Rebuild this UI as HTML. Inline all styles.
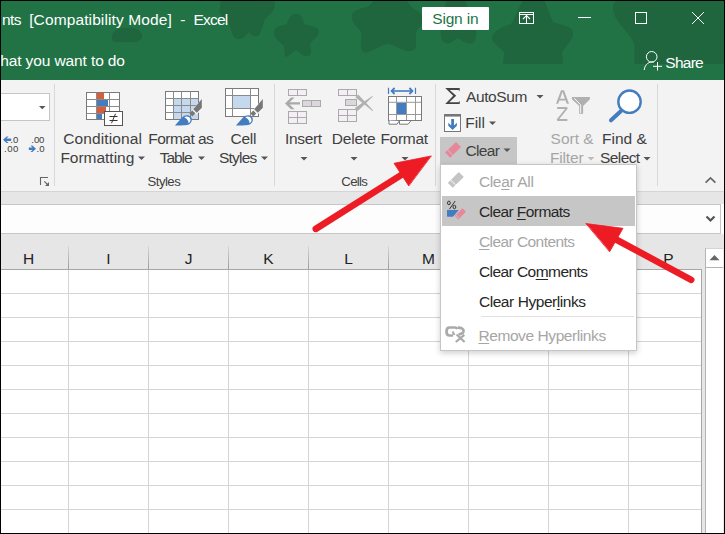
<!DOCTYPE html>
<html><head><meta charset="utf-8"><style>
html,body{margin:0;padding:0;width:725px;height:534px;overflow:hidden;background:#fff;}
body{position:relative;font-family:"Liberation Sans",sans-serif;}
.t{position:absolute;white-space:nowrap;}
.r{position:absolute;}
u{text-decoration:underline;text-underline-offset:1.5px;text-decoration-thickness:1px;}
</style></head><body>
<div class="r" style="left:0px;top:0px;width:725px;height:80px;background:#217346;"></div>
<svg class="r" style="left:0;top:0" width="725" height="534" viewBox="0 0 725 534" ><g fill="#1f653e">
<path d="M221,0 L274,0 C276,6 274,12 268,16 C262,20 263,30 259,35 C255,38 251,35 249,32 C246,36 242,40 237,39 C231,37 232,28 228,22 C224,18 218,14 220,8 Z"/>
<path d="M295,14 C300,13 303,18 304,24 C308,26 318,26 319,31 C319,37 312,40 310,44 C311,49 312,55 308,56 C303,57 299,52 296,50 C292,52 290,56 285,57 L284,46 C280,42 273,38 274,31 C275,26 283,26 287,24 C289,18 291,14 295,14 Z"/>
<path d="M374,0 H407 C409,6 414,9 419,12 C424,16 424,24 418,29 C415,33 416,40 416,45 C416,51 410,52 404,50 C398,48 392,44 387,44 C382,45 374,50 368,52 C362,54 360,48 361,42 C362,36 362,32 358,28 C353,24 350,18 353,13 C356,9 364,8 369,6 C371,4 373,2 374,0 Z"/>
<path d="M447,0 H465 C467,6 469,12 472,20 C476,28 478,36 474,42 C470,46 462,41 458,38 C454,40 450,45 445,43 C440,40 440,30 441,22 C442,14 445,6 447,0 Z"/>
<path d="M524,0 L544,0 C548,8 550,16 553,22 C560,25 572,26 573,32 C574,40 565,46 562,52 L563,64 L503,64 L504,52 C500,48 491,42 492,37 C494,30 505,26 511,24 C516,18 518,6 524,0 Z"/>
<path d="M618,0 H725 V64 H634.5 V46 C634.5,42 631,38 628,34 C622,26 614,18 613,10 C612.5,5 614,1.5 618,0 Z"/>
<path d="M112,36 C114,29 120,28 126,28 C134,27 142,30 142,36 C142,40 138,41 136,42 L115,42 C112,41 111,39 112,36 Z"/>
</g></svg>
<div class="t" style="left:1.97px;top:11.88px;font-size:15.5px;line-height:15.5px;color:#fff;letter-spacing:-0.544px;">nts</div>
<div class="t" style="left:-7.4px;top:11.88px;font-size:15.5px;line-height:15.5px;color:#fff;">e</div>
<div class="t" style="left:29.2px;top:11.88px;font-size:15.5px;line-height:15.5px;color:#fff;letter-spacing:0.115px;">[Compatibility Mode]</div>
<div class="t" style="left:180.31px;top:11.88px;font-size:15.5px;line-height:15.5px;color:#fff;letter-spacing:0.216px;">-</div>
<div class="t" style="left:193.43px;top:11.88px;font-size:15.5px;line-height:15.5px;color:#fff;letter-spacing:-0.773px;">Excel</div>
<div class="t" style="left:0.23px;top:53.08px;font-size:15.5px;line-height:15.5px;color:#fff;letter-spacing:-0.114px;">hat you want to do</div>
<div class="r" style="left:422px;top:7px;width:67px;height:23px;background:#fff;border-radius:1px"></div>
<div class="t" style="left:432.3px;top:10.58px;font-size:15.5px;line-height:15.5px;color:#217346;letter-spacing:-0.197px;">Sign in</div>
<svg class="r" style="left:0;top:0" width="725" height="534" viewBox="0 0 725 534" ><g fill="none" stroke="#fff" stroke-width="1">
<rect x="519.5" y="12.5" width="14" height="11"/>
<path d="M519.5,14.5 H533.5 M526.5,15 V23.5"/>
<path d="M523,19 L526.5,15.6 L530,19" stroke-width="1.1"/>
<path d="M578,17.5 H591"/>
<rect x="635.5" y="12.5" width="11" height="11"/>
<path d="M692,12 L704,24 M704,12 L692,24"/>
<circle cx="651.7" cy="56.8" r="5.3"/>
<path d="M644.2,70 C645,64 649,61.5 654,62"/>
<path d="M657.5,62 V70.5 M653,66.3 H662"/>
</g></svg>
<div class="t" style="left:665.3px;top:54.88px;font-size:15.5px;line-height:15.5px;color:#fff;letter-spacing:-0.742px;">Share</div>
<div class="r" style="left:0px;top:80px;width:725px;height:111px;background:#f3f3f3;"></div>
<div class="r" style="left:0px;top:191px;width:725px;height:1px;background:#d5d5d5;"></div>
<div class="r" style="left:0px;top:192px;width:725px;height:12px;background:#e6e6e6;"></div>
<div class="r" style="left:54px;top:84px;width:1px;height:102px;background:#d8d8d8;"></div>
<div class="r" style="left:274px;top:84px;width:1px;height:102px;background:#d8d8d8;"></div>
<div class="r" style="left:435px;top:84px;width:1px;height:102px;background:#d8d8d8;"></div>
<div class="r" style="left:657px;top:84px;width:1px;height:102px;background:#d8d8d8;"></div>
<div class="r" style="left:1px;top:93px;width:49px;height:28px;background:#fff;box-sizing:border-box;border:1px solid #c6c6c6;border-left:none"></div>
<svg class="r" style="left:0;top:0" width="725" height="534" viewBox="0 0 725 534" ><path d="M39,106 H45.5 L42.25,109.3 Z" fill="#555"/></svg>
<div class="t" style="left:10.32px;top:134.67px;font-size:9.6px;line-height:9.6px;color:#404040;letter-spacing:-0.055px;">.0</div>
<div class="t" style="left:4.12px;top:143.57px;font-size:9.6px;line-height:9.6px;color:#404040;letter-spacing:0.403px;">.00</div>
<div class="t" style="left:31.32px;top:134.67px;font-size:9.6px;line-height:9.6px;color:#404040;letter-spacing:-0.097px;">.00</div>
<div class="t" style="left:36.52px;top:143.57px;font-size:9.6px;line-height:9.6px;color:#404040;letter-spacing:-0.055px;">.0</div>
<svg class="r" style="left:0;top:0" width="725" height="534" viewBox="0 0 725 534" ><path d="M3,139.8 L6.6,136.6 H8.6 L6.4,138.6 H11.2 V141 H6.4 L8.6,143 H6.6 Z" fill="#447cc0"/>
<path d="M36,148.8 L32.4,145.6 H30.4 L32.6,147.6 H28.8 V150 H32.6 L30.4,152 H32.4 Z" fill="#447cc0"/>
<path d="M40.5,177 V185 M40.5,177.5 H48 M44.3,181.3 L47.5,184.5" fill="none" stroke="#666" stroke-width="1.1"/><polygon points="45,186 49,186 49,182" fill="#666"/></svg>
<svg class="r" style="left:0;top:0" width="725" height="534" viewBox="0 0 725 534" >
<rect x="86.5" y="92.5" width="33" height="27" fill="#fff" stroke="#7a7a7a"/>
<rect x="97" y="93" width="7" height="6" fill="#d95d3a"/>
<rect x="97" y="100" width="11" height="6" fill="#447cc0"/>
<rect x="97" y="107" width="9" height="6" fill="#d95d3a"/>
<rect x="97" y="114" width="5" height="5" fill="#447cc0"/>
<path d="M86.5,99.5 H119.5 M86.5,106.5 H119.5 M86.5,113.5 H119.5 M96.5,92.5 V119.5 M109.5,92.5 V119.5" stroke="#8a8a8a" fill="none"/>
<rect x="104.5" y="111.5" width="18" height="14" fill="#fff" stroke="#555"/>
<path d="M109.5,116.5 H117.5 M109.5,120.5 H117.5 M115.5,113.8 L111.5,123.2" stroke="#333" fill="none"/>
<rect x="165.5" y="91.5" width="33" height="28" fill="#fff" stroke="#7a7a7a"/>
<rect x="174" y="99" width="24" height="20" fill="#c5d9ee"/>
<path d="M165.5,98.5 H198.5 M165.5,105.5 H198.5 M165.5,112.5 H198.5 M173.5,91.5 V119.5 M181.5,91.5 V119.5 M190.5,91.5 V119.5" stroke="#8a8a8a" fill="none"/>
<polygon points="203,97.5 203,108.5 196.5,114.5 192,110" fill="#f3f3f3"/>
<g transform="translate(-61,0)">
<polygon points="262.8,98.9 262.8,107.8 257.8,112.8 254.2,109.2" fill="#777"/>
<polygon points="253.3,110.6 256.2,113.5 253.3,116.4 250.4,113.5" fill="#777"/>
<path d="M235.9,125.5 L243,117.5 C245.5,114.8 249.5,114.2 251.8,116.8 C253.6,119 253,122.3 250.5,124 C248.8,125.2 246.5,125.5 235.9,125.5 Z" fill="#447cc0"/>
<path d="M245.2,117.2 C247.5,116 250.5,116.6 251.3,119 C251.9,121 250.9,122.6 249.6,123.3 C249.6,121 248.3,118.6 245.2,117.2 Z" fill="#fff"/>
</g>
<rect x="225.5" y="88.5" width="33" height="28" fill="#fff" stroke="#7a7a7a"/>
<rect x="233" y="95" width="17.5" height="13.5" fill="#c5d9ee"/>
<path d="M225.5,95.5 H258.5 M225.5,108.5 H258.5 M232.5,88.5 V116.5 M250.5,88.5 V116.5" stroke="#8a8a8a" fill="none"/>
<polygon points="264,97.5 264,108.5 257.5,114.5 253,110" fill="#f3f3f3"/>
<g transform="translate(0,0)">
<polygon points="262.8,98.9 262.8,107.8 257.8,112.8 254.2,109.2" fill="#777"/>
<polygon points="253.3,110.6 256.2,113.5 253.3,116.4 250.4,113.5" fill="#777"/>
<path d="M235.9,125.5 L243,117.5 C245.5,114.8 249.5,114.2 251.8,116.8 C253.6,119 253,122.3 250.5,124 C248.8,125.2 246.5,125.5 235.9,125.5 Z" fill="#447cc0"/>
<path d="M245.2,117.2 C247.5,116 250.5,116.6 251.3,119 C251.9,121 250.9,122.6 249.6,123.3 C249.6,121 248.3,118.6 245.2,117.2 Z" fill="#fff"/>
</g>
</svg>
<div class="t" style="left:63.21px;top:130.88px;font-size:15.5px;line-height:15.5px;color:#404040;letter-spacing:0.107px;">Conditional</div>
<div class="t" style="left:60.43px;top:150.38px;font-size:15.5px;line-height:15.5px;color:#404040;letter-spacing:-0.023px;">Formatting</div>
<svg class="r" style="left:0;top:0" width="725" height="534" viewBox="0 0 725 534" ><path d="M138,156.5 H145 L141.5,160.0 Z" fill="#555"/></svg>
<div class="t" style="left:148.23px;top:130.88px;font-size:15.5px;line-height:15.5px;color:#404040;letter-spacing:-0.517px;">Format as</div>
<div class="t" style="left:159.65px;top:150.38px;font-size:15.5px;line-height:15.5px;color:#404040;letter-spacing:-1.009px;">Table</div>
<svg class="r" style="left:0;top:0" width="725" height="534" viewBox="0 0 725 534" ><path d="M198,156.5 H205 L201.5,160.0 Z" fill="#555"/></svg>
<div class="t" style="left:230.51px;top:130.88px;font-size:15.5px;line-height:15.5px;color:#404040;letter-spacing:-0.292px;">Cell</div>
<div class="t" style="left:219.0px;top:150.38px;font-size:15.5px;line-height:15.5px;color:#404040;letter-spacing:-0.789px;">Styles</div>
<svg class="r" style="left:0;top:0" width="725" height="534" viewBox="0 0 725 534" ><path d="M261,156.5 H268 L264.5,160.0 Z" fill="#555"/></svg>
<div class="t" style="left:147.6px;top:175.22px;font-size:13.2px;line-height:13.2px;color:#404040;letter-spacing:-0.554px;">Styles</div>
<svg class="r" style="left:0;top:0" width="725" height="534" viewBox="0 0 725 534" >
<g stroke="#aaa" fill="#f4eff4">
<rect x="288.5" y="89.5" width="18" height="6"/><path d="M297.5,89.5 V95.5"/>
<rect x="302.5" y="100.5" width="18" height="6" fill="#dcd7dc"/><path d="M311.5,100.5 V106.5"/>
<rect x="288.5" y="111.5" width="18" height="12"/><path d="M297.5,111.5 V123.5 M288.5,117.5 H306.5"/>
</g>
<polygon points="285,103.4 291,97.6 294.6,97.6 289.6,102.2 300,102.2 300,104.6 289.6,104.6 294.6,109.2 291,109.2" fill="#aaa"/>
<g stroke="#aaa" fill="#f4eff4">
<rect x="338.5" y="89.5" width="18" height="6"/><path d="M347.5,89.5 V95.5"/>
<rect x="345.5" y="99.5" width="11" height="6" fill="#dcd7dc"/>
<rect x="338.5" y="109.5" width="18" height="12"/><path d="M347.5,109.5 V121.5 M338.5,115.5 H356.5"/>
</g>
<polygon points="355.3,97.2 358.2,94.4 373.2,110.5 372.6,111" fill="#b0b0b0"/>
<polygon points="354.8,108 357.8,111 372.8,96.6 372.3,96.1" fill="#b0b0b0"/>
<path d="M388.5,87.7 V94 M415.5,87.7 V94" stroke="#447cc0" stroke-width="1.2"/>
<path d="M391.5,91 H412.5" stroke="#447cc0" stroke-width="1.6"/>
<path d="M394.6,88 L391.6,91 L394.6,94 M409.4,88 L412.4,91 L409.4,94" stroke="#447cc0" stroke-width="1.8" fill="none"/>
<rect x="388.5" y="96.5" width="33" height="24" fill="#fff" stroke="#7a7a7a"/>
<rect x="397" y="102.8" width="9.5" height="11.2" fill="#447cc0"/>
<path d="M388.5,102.3 H421.5 M388.5,114.5 H421.5 M396.5,96.5 V120.5 M406.5,96.5 V120.5 M415.5,96.5 V120.5" stroke="#999" fill="none"/>
<path d="M388.5,96.5 H421.5 V120.5 H388.5 Z" stroke="#7a7a7a" fill="none"/>
<path d="M389,120.5 V124.2 H397 L399.3,121 M399.5,121 V124.2 H408 L410.8,121" stroke="#7a7a7a" fill="#fff"/>
</svg>
<div class="t" style="left:285.07px;top:130.88px;font-size:15.5px;line-height:15.5px;color:#404040;letter-spacing:-0.344px;">Insert</div>
<svg class="r" style="left:0;top:0" width="725" height="534" viewBox="0 0 725 534" ><path d="M300.5,157 H307.5 L304.0,160.5 Z" fill="#555"/></svg>
<div class="t" style="left:331.73px;top:130.88px;font-size:15.5px;line-height:15.5px;color:#404040;letter-spacing:-0.169px;">Delete</div>
<svg class="r" style="left:0;top:0" width="725" height="534" viewBox="0 0 725 534" ><path d="M350.5,157 H357.5 L354.0,160.5 Z" fill="#555"/></svg>
<div class="t" style="left:380.43px;top:130.88px;font-size:15.5px;line-height:15.5px;color:#404040;letter-spacing:-0.281px;">Format</div>
<svg class="r" style="left:0;top:0" width="725" height="534" viewBox="0 0 725 534" ><path d="M401.5,157 H408.5 L405.0,160.5 Z" fill="#555"/></svg>
<div class="t" style="left:341.33px;top:175.12px;font-size:13.2px;line-height:13.2px;color:#404040;letter-spacing:-0.723px;">Cells</div>
<svg class="r" style="left:0;top:0" width="725" height="534" viewBox="0 0 725 534" >
<path d="M445.2,88 H459.7 V91.2 L458.6,89.9 H449.7 L456.2,95.8 L449.3,102.2 H458.6 L459.7,100.8 V104 H445.2 L453.2,95.8 Z" fill="#444"/>
<rect x="444.5" y="114.5" width="16" height="17" fill="#fff" stroke="#777"/>
<rect x="444" y="114" width="17" height="2.6" fill="#777"/>
<polygon points="451.2,118.9 454,118.9 454,125.5 456.9,122.8 456.9,125.8 452.6,130 448.3,125.8 448.3,122.8 451.2,125.5" fill="#447cc0"/>
<path fill-rule="evenodd" d="M556,103.8 L561,90.3 H564 L569,103.8 H566.8 L565.6,100.6 H559.4 L558.2,103.8 Z M560.1,98.7 H564.9 L562.5,92 Z" fill="#b0b0b0"/>
<path d="M557.2,108 H567 L557.4,120 H567.4" stroke="#b0b0b0" stroke-width="1.9" fill="none" stroke-linejoin="bevel"/>
<polygon points="571.9,97 589.9,97 589.9,99.2 583.1,106 583.1,113.8 579.2,113.8 579.2,106 571.9,99.2" fill="#b0b0b0"/>
<path d="M574.2,98.2 L580.7,104.9 V113" stroke="#fff" stroke-width="0.9" fill="none"/>
<circle cx="629.5" cy="101.7" r="11.2" fill="#fff" stroke="#447cc0" stroke-width="2.4"/>
<path d="M611,120.3 L621,111" stroke="#447cc0" stroke-width="4" stroke-linecap="round"/>
<path d="M705.6,182.6 L710.5,177.9 L715.4,182.6" stroke="#666" stroke-width="1.7" fill="none"/>
</svg>
<div class="t" style="left:466.07px;top:88.68px;font-size:15.5px;line-height:15.5px;color:#404040;letter-spacing:-0.417px;">AutoSum</div>
<svg class="r" style="left:0;top:0" width="725" height="534" viewBox="0 0 725 534" ><path d="M536.5,95 H543.5 L540.0,98.5 Z" fill="#555"/></svg>
<div class="t" style="left:465.13px;top:115.48px;font-size:15.5px;line-height:15.5px;color:#404040;letter-spacing:0.037px;">Fill</div>
<svg class="r" style="left:0;top:0" width="725" height="534" viewBox="0 0 725 534" ><path d="M489,121.5 H496 L492.5,125.0 Z" fill="#555"/></svg>
<div class="r" style="left:440px;top:137px;width:77px;height:27px;background:#c6c6c6;"></div>
<svg class="r" style="left:0;top:0" width="725" height="534" viewBox="0 0 725 534" ><polygon points="456,142 461,147 450.2,157.8 445,152.6" fill="#e8879a"/>
<path d="M447.6,150 L452.9,155.3" stroke="#c6c6c6" stroke-width="1"/></svg>
<div class="t" style="left:465.51px;top:142.68px;font-size:15.5px;line-height:15.5px;color:#404040;letter-spacing:-0.649px;">Clear</div>
<svg class="r" style="left:0;top:0" width="725" height="534" viewBox="0 0 725 534" ><path d="M503.5,148.5 H510.5 L507.0,152.0 Z" fill="#555"/></svg>
<div class="t" style="left:550.6px;top:130.88px;font-size:15.5px;line-height:15.5px;color:#a6a6a6;letter-spacing:-0.025px;">Sort &amp;</div>
<div class="t" style="left:550.03px;top:150.38px;font-size:15.5px;line-height:15.5px;color:#a6a6a6;letter-spacing:-0.183px;">Filter</div>
<svg class="r" style="left:0;top:0" width="725" height="534" viewBox="0 0 725 534" ><path d="M587.5,157 H594.5 L591.0,160.5 Z" fill="#bbb"/></svg>
<div class="t" style="left:602.03px;top:130.88px;font-size:15.5px;line-height:15.5px;color:#404040;letter-spacing:0.023px;">Find &amp;</div>
<div class="t" style="left:600.1px;top:150.38px;font-size:15.5px;line-height:15.5px;color:#404040;letter-spacing:-0.612px;">Select</div>
<svg class="r" style="left:0;top:0" width="725" height="534" viewBox="0 0 725 534" ><path d="M643.5,157 H650.5 L647.0,160.5 Z" fill="#555"/></svg>
<div class="r" style="left:0px;top:204px;width:721px;height:30px;background:#fdfdfd;box-sizing:border-box;border:1px solid #c6c6c6;border-left:none"></div>
<svg class="r" style="left:0;top:0" width="725" height="534" viewBox="0 0 725 534" ><path d="M706.5,216.5 L710.5,220.5 L714.5,216.5" stroke="#555" stroke-width="2.2" fill="none"/></svg>
<div class="r" style="left:0px;top:234px;width:725px;height:300px;background:#e6e6e6;"></div>
<div class="r" style="left:0px;top:270px;width:701px;height:264px;background:#fff;"></div>
<div class="r" style="left:0px;top:269px;width:701px;height:1px;background:#a6a6a6;"></div>
<div class="t" style="left:8.5px;top:250.88px;width:40px;text-align:center;font-size:15.5px;line-height:15.5px;color:#222">H</div>
<div class="t" style="left:88.5px;top:250.88px;width:40px;text-align:center;font-size:15.5px;line-height:15.5px;color:#222">I</div>
<div class="t" style="left:168.5px;top:250.88px;width:40px;text-align:center;font-size:15.5px;line-height:15.5px;color:#222">J</div>
<div class="t" style="left:248.5px;top:250.88px;width:40px;text-align:center;font-size:15.5px;line-height:15.5px;color:#222">K</div>
<div class="t" style="left:328.5px;top:250.88px;width:40px;text-align:center;font-size:15.5px;line-height:15.5px;color:#222">L</div>
<div class="t" style="left:408.5px;top:250.88px;width:40px;text-align:center;font-size:15.5px;line-height:15.5px;color:#222">M</div>
<div class="t" style="left:488.5px;top:250.88px;width:40px;text-align:center;font-size:15.5px;line-height:15.5px;color:#222">N</div>
<div class="t" style="left:568.5px;top:250.88px;width:40px;text-align:center;font-size:15.5px;line-height:15.5px;color:#222">O</div>
<div class="t" style="left:648.5px;top:250.88px;width:40px;text-align:center;font-size:15.5px;line-height:15.5px;color:#222">P</div>
<div class="r" style="left:68px;top:246px;width:1px;height:23px;background:linear-gradient(#d8d8d8,#9c9c9c);"></div>
<div class="r" style="left:68px;top:270px;width:1px;height:264px;background:#d4d4d4;"></div>
<div class="r" style="left:148px;top:246px;width:1px;height:23px;background:linear-gradient(#d8d8d8,#9c9c9c);"></div>
<div class="r" style="left:148px;top:270px;width:1px;height:264px;background:#d4d4d4;"></div>
<div class="r" style="left:228px;top:246px;width:1px;height:23px;background:linear-gradient(#d8d8d8,#9c9c9c);"></div>
<div class="r" style="left:228px;top:270px;width:1px;height:264px;background:#d4d4d4;"></div>
<div class="r" style="left:308px;top:246px;width:1px;height:23px;background:linear-gradient(#d8d8d8,#9c9c9c);"></div>
<div class="r" style="left:308px;top:270px;width:1px;height:264px;background:#d4d4d4;"></div>
<div class="r" style="left:388px;top:246px;width:1px;height:23px;background:linear-gradient(#d8d8d8,#9c9c9c);"></div>
<div class="r" style="left:388px;top:270px;width:1px;height:264px;background:#d4d4d4;"></div>
<div class="r" style="left:468px;top:246px;width:1px;height:23px;background:linear-gradient(#d8d8d8,#9c9c9c);"></div>
<div class="r" style="left:468px;top:270px;width:1px;height:264px;background:#d4d4d4;"></div>
<div class="r" style="left:548px;top:246px;width:1px;height:23px;background:linear-gradient(#d8d8d8,#9c9c9c);"></div>
<div class="r" style="left:548px;top:270px;width:1px;height:264px;background:#d4d4d4;"></div>
<div class="r" style="left:628px;top:246px;width:1px;height:23px;background:linear-gradient(#d8d8d8,#9c9c9c);"></div>
<div class="r" style="left:628px;top:270px;width:1px;height:264px;background:#d4d4d4;"></div>
<div class="r" style="left:0px;top:293px;width:701px;height:1px;background:#d4d4d4;"></div>
<div class="r" style="left:0px;top:317px;width:701px;height:1px;background:#d4d4d4;"></div>
<div class="r" style="left:0px;top:341px;width:701px;height:1px;background:#d4d4d4;"></div>
<div class="r" style="left:0px;top:365px;width:701px;height:1px;background:#d4d4d4;"></div>
<div class="r" style="left:0px;top:389px;width:701px;height:1px;background:#d4d4d4;"></div>
<div class="r" style="left:0px;top:413px;width:701px;height:1px;background:#d4d4d4;"></div>
<div class="r" style="left:0px;top:437px;width:701px;height:1px;background:#d4d4d4;"></div>
<div class="r" style="left:0px;top:461px;width:701px;height:1px;background:#d4d4d4;"></div>
<div class="r" style="left:0px;top:485px;width:701px;height:1px;background:#d4d4d4;"></div>
<div class="r" style="left:0px;top:509px;width:701px;height:1px;background:#d4d4d4;"></div>
<div class="r" style="left:0px;top:533px;width:701px;height:1px;background:#d4d4d4;"></div>
<div class="r" style="left:701px;top:269px;width:1px;height:265px;background:#a6a6a6;"></div>
<div class="r" style="left:705px;top:248px;width:18px;height:286px;background:#fff;box-sizing:border-box;border-left:1px solid #b4b4b4;border-top:1px solid #d4d4d4"></div>
<div class="r" style="left:705px;top:267px;width:18px;height:1px;background:#b4b4b4;"></div>
<svg class="r" style="left:0;top:0" width="725" height="534" viewBox="0 0 725 534" ><path d="M709.5,260.3 H719.5 L714.5,255 Z" fill="#666"/></svg>
<div class="r" style="left:440px;top:164px;width:197px;height:187px;background:#fff;box-sizing:border-box;border:1px solid #c6c6c6;box-shadow:0 2px 6px rgba(0,0,0,0.2)"></div>
<div class="r" style="left:442px;top:196px;width:193px;height:30px;background:#c6c6c6;"></div>
<div class="t" style="left:478.91px;top:174.18px;font-size:15.5px;line-height:15.5px;color:#a6a6a6;letter-spacing:-0.343px;">Cle<u>a</u>r All</div>
<div class="t" style="left:478.91px;top:204.08px;font-size:15.5px;line-height:15.5px;color:#262626;letter-spacing:-0.570px;">Clear <u>F</u>ormats</div>
<div class="t" style="left:478.91px;top:234.08px;font-size:15.5px;line-height:15.5px;color:#a6a6a6;letter-spacing:-0.557px;"><u>C</u>lear Contents</div>
<div class="t" style="left:478.91px;top:264.08px;font-size:15.5px;line-height:15.5px;color:#262626;letter-spacing:-0.549px;">Clear Co<u>m</u>ments</div>
<div class="t" style="left:478.91px;top:293.88px;font-size:15.5px;line-height:15.5px;color:#262626;letter-spacing:-0.437px;">Clear Hyper<u>l</u>inks</div>
<div class="r" style="left:481px;top:316px;width:153px;height:1px;background:#e1e1e1;"></div>
<div class="t" style="left:478.43px;top:327.78px;font-size:15.5px;line-height:15.5px;color:#a6a6a6;letter-spacing:-0.415px;"><u>R</u>emove Hyperlinks</div>
<svg class="r" style="left:0;top:0" width="725" height="534" viewBox="0 0 725 534" >
<polygon points="458.8,172 463.8,176.9 452.7,187.8 447.8,182.9" fill="#c4c4c4"/>
<path d="M450.6,180 L455.2,184.6" stroke="#fff" stroke-width="1"/>
<g stroke="#333" stroke-width="1" fill="none"><ellipse cx="448.9" cy="202.9" rx="1.4" ry="1.8"/><ellipse cx="454.4" cy="207" rx="1.4" ry="1.8"/><path d="M455.2,201 L449.4,209.2"/></g>
<path d="M447,210 H458.8 L453,216.7 H448.3 C447.5,216.7 447,216.2 447,215.4 Z" fill="#447cc0"/>
<polygon points="462.5,208.3 466,211.8 458.3,219.5 454.7,215.8" fill="#e8879a"/>
<path d="M455.7,214.6 L459.3,218.2" stroke="#c6c6c6" stroke-width="1"/>
<path d="M453,335.5 H449.5 C445.5,335.5 445.5,327.5 449.5,327.5 H455 C456.5,327.5 457,328 457.5,329" stroke="#aaa" stroke-width="2.7" fill="none"/>
<path d="M458,327.6 C462,327.6 464,329.5 463.5,331.5 C463,333.5 461,334.3 458.5,334.3" stroke="#aaa" stroke-width="2.7" fill="none"/>
<path d="M452.5,331.5 L454.5,335" stroke="#aaa" stroke-width="2" fill="none"/>
<path d="M456.6,334.5 L464.6,342 M455.8,342 L464.3,334.8" stroke="#aaa" stroke-width="2.2"/>
</svg>
<svg class="r" style="left:0;top:0" width="725" height="534" viewBox="0 0 725 534" ><g fill="#ed1c24" stroke="#ed1c24" stroke-linecap="round" stroke-linejoin="round">
<path d="M315.8,228.9 L402,174.5" stroke-width="6.6" fill="none"/>
<path d="M431,156 L394,163.3 L408.6,185.7 Z" stroke-width="0.8"/>
<path d="M691.2,279.8 L617,240" stroke-width="6.6" fill="none"/>
<path d="M586.2,223.6 L623,228.3 L609.8,251.5 Z" stroke-width="0.8"/>
</g></svg>
<div class="r" style="left:0;top:0;width:725px;height:534px;box-sizing:border-box;border:1px solid #000"></div>
</body></html>
